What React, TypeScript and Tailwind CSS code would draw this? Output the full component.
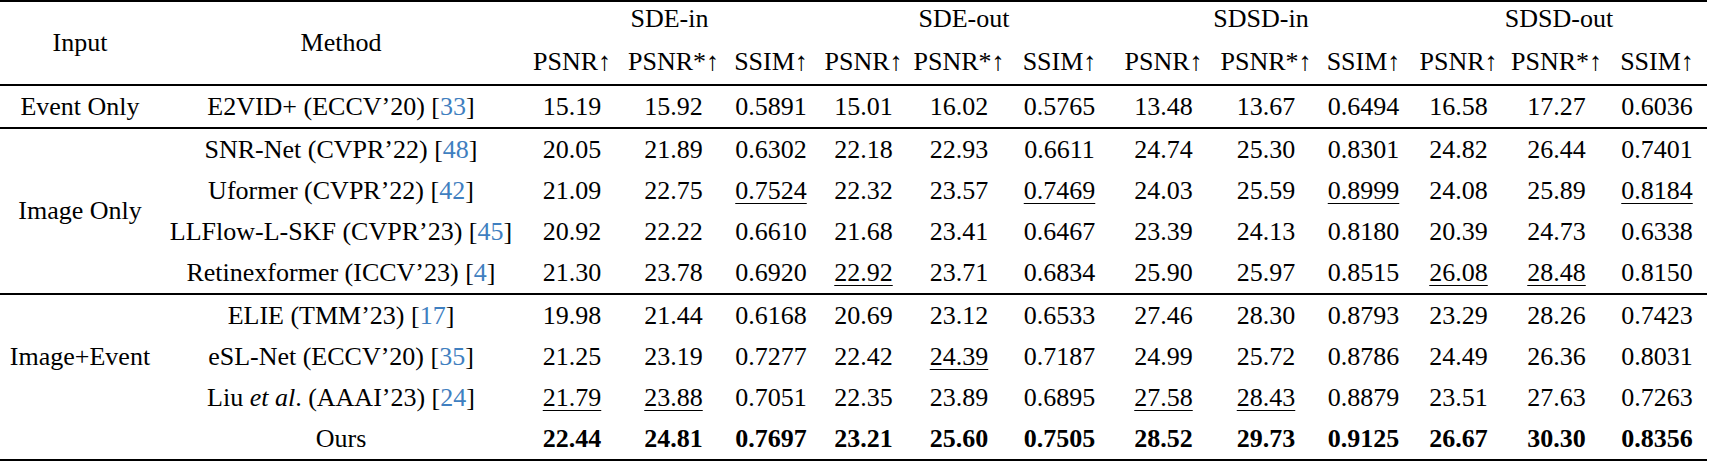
import type { ReactNode } from "react";

const metricHeads = ["PSNR↑", "PSNR*↑", "SSIM↑"];
const groups = ["SDE-in", "SDE-out", "SDSD-in", "SDSD-out"];

type Row = { method: ReactNode; values: string[]; bold?: boolean };

function Cite({ n }: { n: string }) {
  return (
    <>
      [<span className="text-[#3f7fc0]">{n}</span>]
    </>
  );
}

// a leading "_" marks the second-best (underlined) value
const eventOnly: Row[] = [
  {
    method: <>E2VID+ (ECCV’20) <Cite n="33" /></>,
    values: ["15.19", "15.92", "0.5891", "15.01", "16.02", "0.5765", "13.48", "13.67", "0.6494", "16.58", "17.27", "0.6036"],
  },
];

const imageOnly: Row[] = [
  {
    method: <>SNR-Net (CVPR’22) <Cite n="48" /></>,
    values: ["20.05", "21.89", "0.6302", "22.18", "22.93", "0.6611", "24.74", "25.30", "0.8301", "24.82", "26.44", "0.7401"],
  },
  {
    method: <>Uformer (CVPR’22) <Cite n="42" /></>,
    values: ["21.09", "22.75", "_0.7524", "22.32", "23.57", "_0.7469", "24.03", "25.59", "_0.8999", "24.08", "25.89", "_0.8184"],
  },
  {
    method: <>LLFlow-L-SKF (CVPR’23) <Cite n="45" /></>,
    values: ["20.92", "22.22", "0.6610", "21.68", "23.41", "0.6467", "23.39", "24.13", "0.8180", "20.39", "24.73", "0.6338"],
  },
  {
    method: <>Retinexformer (ICCV’23) <Cite n="4" /></>,
    values: ["21.30", "23.78", "0.6920", "_22.92", "23.71", "0.6834", "25.90", "25.97", "0.8515", "_26.08", "_28.48", "0.8150"],
  },
];

const imageEvent: Row[] = [
  {
    method: <>ELIE (TMM’23) <Cite n="17" /></>,
    values: ["19.98", "21.44", "0.6168", "20.69", "23.12", "0.6533", "27.46", "28.30", "0.8793", "23.29", "28.26", "0.7423"],
  },
  {
    method: <>eSL-Net (ECCV’20) <Cite n="35" /></>,
    values: ["21.25", "23.19", "0.7277", "22.42", "_24.39", "0.7187", "24.99", "25.72", "0.8786", "24.49", "26.36", "0.8031"],
  },
  {
    method: <>Liu <i>et al</i>. (AAAI’23) <Cite n="24" /></>,
    values: ["_21.79", "_23.88", "0.7051", "22.35", "23.89", "0.6895", "_27.58", "_28.43", "0.8879", "23.51", "27.63", "0.7263"],
  },
];

const ours: Row = {
  method: <>Ours</>,
  bold: true,
  values: ["22.44", "24.81", "0.7697", "23.21", "25.60", "0.7505", "28.52", "29.73", "0.9125", "26.67", "30.30", "0.8356"],
};

function Rule() {
  return <div className="col-span-full bg-black" />;
}

function Cell({ children, className = "" }: { children?: ReactNode; className?: string }) {
  return <div className={`flex items-center justify-center whitespace-nowrap ${className}`}>{children}</div>;
}

function Value({ v, bold }: { v: string; bold?: boolean }) {
  const under = v.startsWith("_");
  return (
    <Cell className={bold ? "font-bold" : ""}>
      {under ? (
        <span className="underline decoration-1 underline-offset-[4px]">{v.slice(1)}</span>
      ) : (
        v
      )}
    </Cell>
  );
}

function RowCells({ row }: { row: Row }) {
  return (
    <>
      <Cell>
        <span>{row.method}</span>
      </Cell>
      {row.values.map((v, i) => (
        <Value key={i} v={v} bold={row.bold} />
      ))}
    </>
  );
}

export default function App() {
  return (
    <div className="min-h-[463px] w-[1710px] bg-white text-black">
      <div className="grid w-[1707px] grid-cols-[160px_362px_100px_103px_92px_93px_98px_103px_105px_100px_95px_95px_101px_100px] grid-rows-[2px_38px_44px_2px_41px_2px_41px_41px_41px_41px_2px_41px_41px_41px_41px_2px] font-['Liberation_Serif','Times_New_Roman',serif] text-[26px] leading-none">
        <Rule />

        <Cell className="row-span-2">Input</Cell>
        <Cell className="row-span-2">Method</Cell>
        {groups.map((g) => (
          <Cell key={g} className="col-span-3 pb-[4px]">
            {g}
          </Cell>
        ))}
        {groups.map((g) =>
          metricHeads.map((m) => <Cell key={g + m}>{m}</Cell>)
        )}

        <Rule />
        <Cell>Event Only</Cell>
        <RowCells row={eventOnly[0]} />

        <Rule />
        <Cell className="row-span-4">Image Only</Cell>
        {imageOnly.map((r, i) => (
          <RowCells key={i} row={r} />
        ))}

        <Rule />
        <Cell className="row-span-3">Image+Event</Cell>
        {imageEvent.map((r, i) => (
          <RowCells key={i} row={r} />
        ))}
        <Cell />
        <RowCells row={ours} />

        <Rule />
      </div>
    </div>
  );
}
